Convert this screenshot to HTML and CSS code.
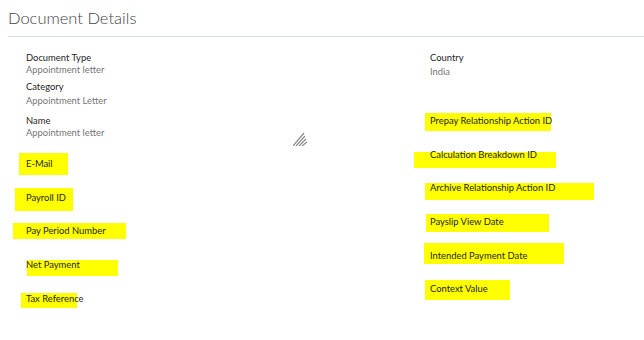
FILE: index.html
```html
<!DOCTYPE html>
<html lang="en">
<head>
  <meta charset="UTF-8">
  <title>Document Details</title>
  <link rel="stylesheet" href="styles.css">
</head>
<body>
  <div class="header">Document Details</div>

  <div class="details">
    <div class="col left">
      <div class="field first">
        <div class="label">Document Type</div>
        <div class="value">Appointment letter</div>
      </div>
      <div class="field cat">
        <div class="label">Category</div>
        <div class="value gap">Appointment Letter</div>
      </div>
      <div class="field name">
        <div class="label">Name</div>
        <div class="value">Appointment letter</div>
      </div>
      <div class="marks left-marks">
        <div class="row"><span class="mark m-email">E-Mail</span></div>
        <div class="row"><span class="mark m-payroll">Payroll ID</span></div>
        <div class="row"><span class="mark m-period">Pay Period Number</span></div>
        <div class="row"><span class="mark m-net">Net Payment</span></div>
        <div class="row"><span class="mark m-tax">Tax Reference</span></div>
      </div>
    </div>

    <div class="col right">
      <div class="field first">
        <div class="label">Country</div>
        <div class="value gap">India</div>
      </div>
      <div class="marks right-marks">
        <div class="row"><span class="mark m-prepay">Prepay Relationship Action ID</span></div>
        <div class="row"><span class="mark m-calc">Calculation Breakdown ID</span></div>
        <div class="row"><span class="mark m-archive">Archive Relationship Action ID</span></div>
        <div class="row"><span class="mark m-payslip">Payslip View Date</span></div>
        <div class="row"><span class="mark m-intended">Intended Payment Date</span></div>
        <div class="row"><span class="mark m-context">Context Value</span></div>
      </div>
    </div>

    <svg class="grip" width="14" height="14" viewBox="0 0 14 14">
      <g stroke="#8a8a8a" stroke-width="1.2">
        <line x1="0" y1="14" x2="11" y2="1"/>
        <line x1="3" y1="14" x2="12" y2="4"/>
        <line x1="6" y1="14" x2="13" y2="7"/>
        <line x1="9" y1="14" x2="14" y2="10"/>
      </g>
    </svg>
  </div>
</body>
</html>
```

FILE: styles.css
```css
body {
  margin: 0;
  background: #fff;
  font-family: Lato, "Open Sans", sans-serif;
  color: #222;
  font-size: 9.4px;
}
.header {
  margin-left: 8px;
  margin-top: -2px;
  height: 39px;
  box-sizing: border-box;
  border-bottom: 1px solid #d6dbe0;
  font-size: 16.5px;
  font-weight: 300;
  color: #444;
  line-height: 40px;
}
.details {
  position: relative;
  display: flex;
}
.col.left {
  width: 430px;
  padding-left: 26px;
  box-sizing: border-box;
}
.col.right {
  flex: 1;
}
.field {
  line-height: 12px;
}
.field.first {
  margin-top: 15px;
}
.field.cat {
  margin-top: 5px;
}
.field.name {
  margin-top: 8px;
}
.label {
  color: #1e1e1e;
}
.value {
  color: #777;
}
.value.gap {
  margin-top: 2px;
}
.left-marks {
  margin-top: 8px;
}
.right-marks {
  margin-top: 26px;
}
.row {
  height: 33.7px;
  display: flex;
  align-items: center;
}
.mark {
  position: relative;
  line-height: 12px;
  color: #1e1e1e;
  z-index: 0;
}
.mark::before {
  content: "";
  position: absolute;
  background: #ffff00;
  z-index: -1;
}
.m-email::before { left: -7px; width: 49px; top: -5px; height: 22px; }
.m-payroll::before { left: -11px; width: 58px; top: -4px; height: 23px; }
.m-period::before { left: -13px; width: 113px; top: -2px; height: 16px; }
.m-net::before { left: 1px; width: 91px; top: 1px; height: 16px; }
.m-tax::before { left: -5px; width: 56px; top: 0; height: 15px; }
.m-prepay::before { left: -5px; width: 126px; top: -2px; height: 18px; }
.m-calc::before { left: -16px; width: 142px; top: 3px; height: 16px; }
.m-archive::before { left: -5px; width: 169px; top: 1px; height: 17px; }
.m-payslip::before { left: -4px; width: 123px; top: -2px; height: 18px; }
.m-intended::before { left: -6px; width: 140px; top: -7px; height: 21px; }
.m-context::before { left: -5px; width: 85px; top: -3px; height: 20px; }
.grip {
  position: absolute;
  left: 293px;
  top: 95px;
}
```
